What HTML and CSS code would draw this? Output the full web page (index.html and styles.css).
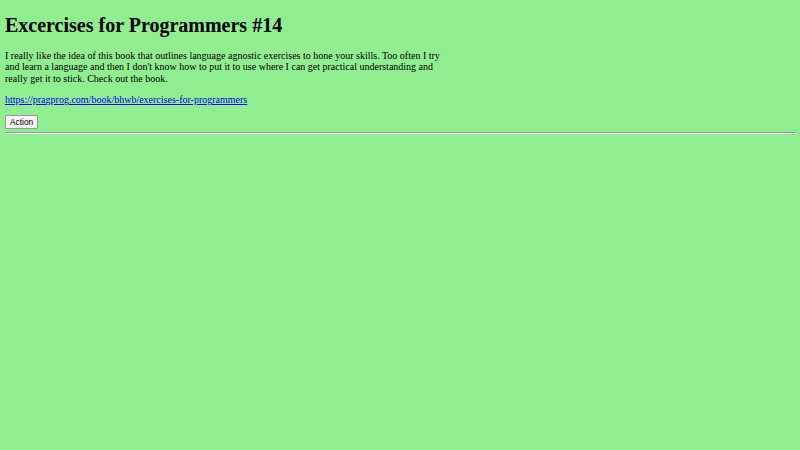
FILE: index.html
```html
<!DOCTYPE html>
<html>
<head>
<meta charset="utf-8">
<title>Excercises for Programmers #14</title>
<link rel="stylesheet" href="styles.css">
</head>
<body>
<div class="post">
  <h1 class="title">Excercises for Programmers #14</h1>
  <p class="text">I really like the idea of this book that outlines language agnostic exercises to hone your skills. Too often I try and learn a language and then I don't know how to put it to use where I can get practical understanding and really get it to stick. Check out the book.</p>
  <p class="link-row"><a class="link" href="#">https://pragprog.com/book/bhwb/exercises-for-programmers</a></p>
  <button class="action">Action</button>
  <hr class="rule">
</div>
</body>
</html>
```

FILE: styles.css
```css
html, body {
  background: #90ee90;
}
body {
  margin: 5px;
  font-family: "Liberation Serif", "Times New Roman", serif;
  font-size: 10px;
  color: #000;
}
.title {
  font-size: 20px;
  font-weight: bold;
  margin: 8.5px 0 13.4px;
}
.text {
  max-width: 440px;
  margin: 10px 0;
  line-height: 11.5px;
}
.link-row {
  margin: 10px 0;
}
.link {
  color: #0000ee;
  text-decoration: underline;
}
.action {
  display: block;
  font-family: "Liberation Sans", Arial, sans-serif;
  font-size: 8.33px;
  padding: 1px 4px;
  margin: 0;
  background: #f4f4f4;
  border: 1px solid #9a9a9a;
  border-radius: 1px;
  color: #000;
}
.rule {
  margin: 3px 0;
  border: 0;
  border-top: 1px solid #9a9a9a;
  border-bottom: 1px solid #f0f0f0;
  height: 0;
}
```
